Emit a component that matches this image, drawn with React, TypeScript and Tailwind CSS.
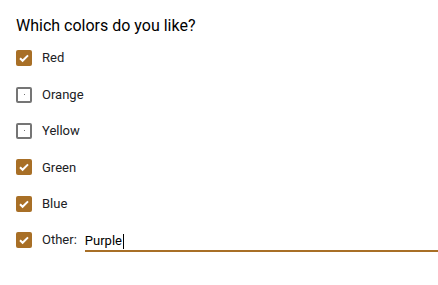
const options = [
  { label: "Red", checked: true },
  { label: "Orange", checked: false },
  { label: "Yellow", checked: false },
  { label: "Green", checked: true },
  { label: "Blue", checked: true },
];

function Box({ checked }: { checked: boolean }) {
  if (checked) {
    return (
      <span className="flex h-4 w-4 shrink-0 items-center justify-center rounded-[2px] bg-[#a86f26]">
        <svg viewBox="0 0 16 16" className="h-4 w-4" fill="none">
          <path d="M4 8.2l2.6 2.6L12 5.4" stroke="#fff" strokeWidth="2" />
        </svg>
      </span>
    );
  }
  return (
    <span className="flex h-4 w-4 shrink-0 items-center justify-center rounded-[2px] border-2 border-[#757575] bg-white">
      <span className="h-[1px] w-[1px] bg-[#757575]" />
    </span>
  );
}

export default function App() {
  return (
    <div className="h-[285px] w-[438px] bg-white font-['Roboto',sans-serif] text-[#202124]">
      <div className="pl-4 pt-[14px]">
        <h1 className="text-[16px] leading-[24px] text-black">Which colors do you like?</h1>
        <div className="pt-[2px]">
          {options.map((o) => (
            <div key={o.label} className="flex h-[36.4px] items-center gap-[10px]">
              <Box checked={o.checked} />
              <span className="text-[13px]">{o.label}</span>
            </div>
          ))}
          <div className="flex h-[36.4px] items-center gap-[10px]">
            <Box checked />
            <span className="text-[13px]">Other:</span>
            <div className="relative -ml-[2px] flex h-[24px] flex-1 items-center border-b-2 border-[#a86f26] pt-[4px] text-[13px] text-black">
              <span>Purple</span>
              <span className="ml-[1px] h-[15px] w-[1px] bg-black" />
            </div>
          </div>
        </div>
      </div>
    </div>
  );
}
